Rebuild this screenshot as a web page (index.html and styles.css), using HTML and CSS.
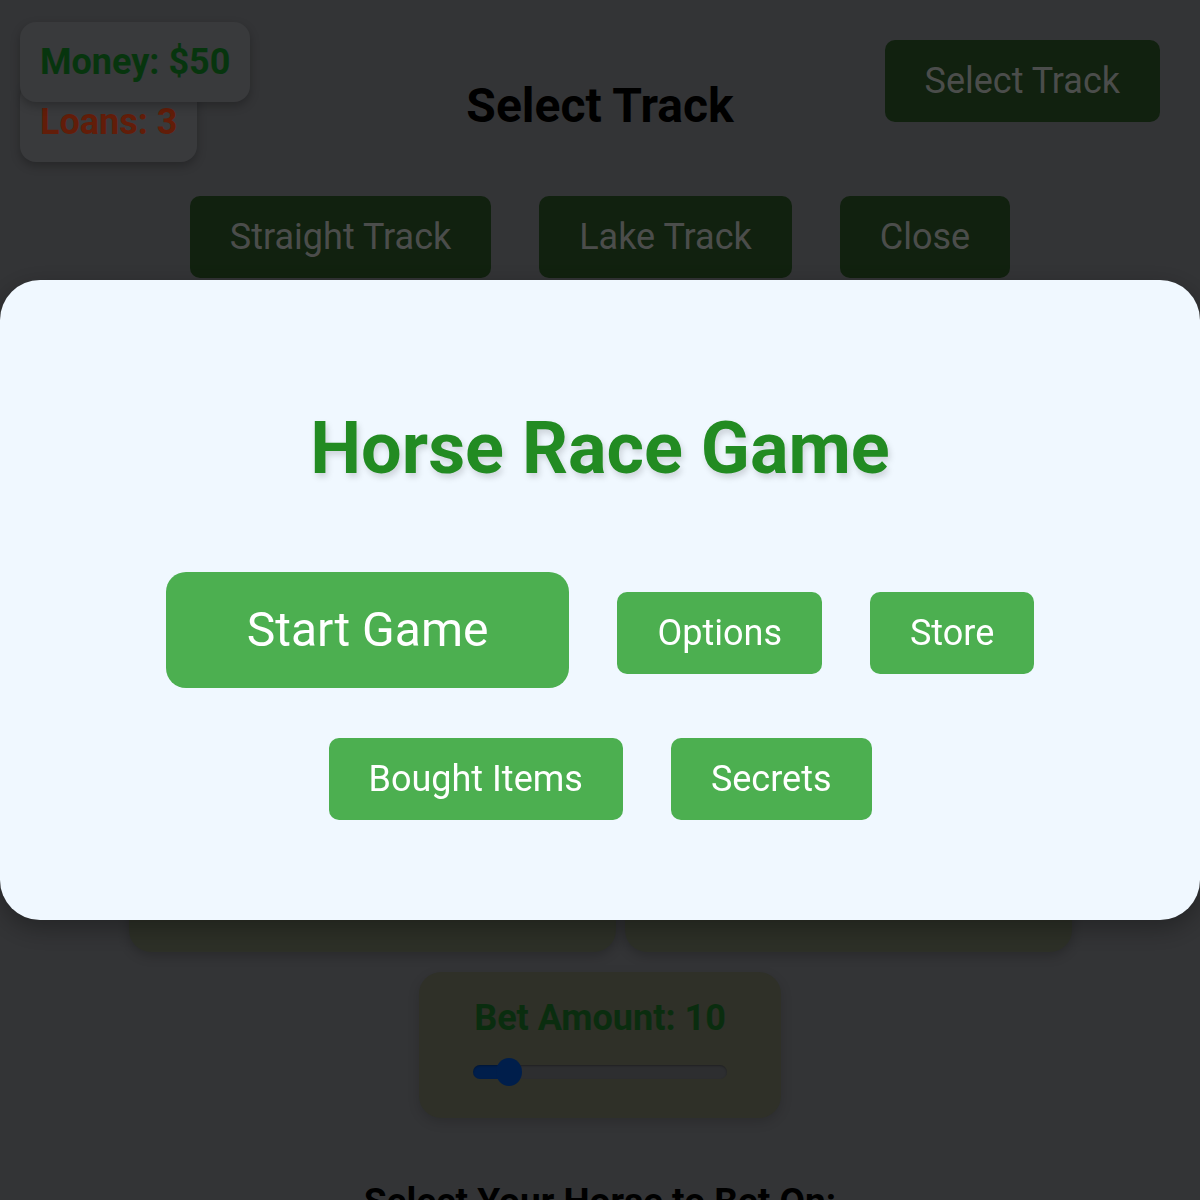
FILE: index.html
```html
<html>
    <head>
        <meta name="viewport" content="width=device-width, initial-scale=1.0">
        <link rel="stylesheet" href="styles.css">
    </head>
    <body>
        <div class="stats">
            <div class="stat money">Money: $50</div>
            <div class="stat loans">Loans: 3</div>
        </div>

        <div class="page">
            <div class="header">
                <div></div>
                <h1 class="page-title">Select Track</h1>
                <div class="header-right">
                    <button class="btn">Select Track</button>
                </div>
            </div>

            <div class="track-row">
                <button class="btn">Straight Track</button>
                <button class="btn">Lake Track</button>
                <button class="btn">Close</button>
            </div>

            <div class="cards">
                <div class="card card-left"></div>
                <div class="card card-right"></div>
            </div>

            <div class="bet-box">
                <div class="bet-label">Bet Amount: 10</div>
                <input class="bet-slider" type="range" min="10" max="100" value="10">
            </div>

            <h2 class="horse-title">Select Your Horse to Bet On:</h2>
        </div>

        <div class="overlay">
            <div class="modal">
                <h1 class="game-title">Horse Race Game</h1>
                <div class="menu-row first">
                    <button class="menu-btn big">Start Game</button>
                    <button class="menu-btn">Options</button>
                    <button class="menu-btn">Store</button>
                </div>
                <div class="menu-row">
                    <button class="menu-btn">Bought Items</button>
                    <button class="menu-btn">Secrets</button>
                </div>
            </div>
        </div>
    </body>
</html>
```

FILE: styles.css
```css
body {
    margin: 0;
    background-color: #66686c;
    font-family: Roboto, "Liberation Sans", sans-serif;
    overflow: hidden;
}

/* money + loans hud */
.stats {
    position: absolute;
    top: 22px;
    left: 20px;
    display: flex;
    flex-direction: column;
    align-items: flex-start;
}

.stat {
    padding: 20px 20px;
    font-size: 36px;
    font-weight: bold;
    line-height: 40px;
    background-color: #727478;
    border-radius: 16px;
    box-shadow: 0 4px 10px rgba(0, 0, 0, .25);
}

.stat.money {
    color: #0e6a1c;
    position: relative;
    z-index: 1;
}

.stat.loans {
    color: #c43a12;
    margin-top: -20px;
}

.page {
    display: flex;
    flex-direction: column;
    align-items: center;
}

.header {
    width: 100%;
    box-sizing: border-box;
    display: grid;
    grid-template-columns: 1fr auto 1fr;
    align-items: start;
    padding: 40px 40px 0 40px;
}

.header-right {
    display: flex;
    justify-content: flex-end;
}

.page-title {
    margin: 38px 0 0 0;
    font-size: 48px;
    line-height: 56px;
    color: #000;
}

.btn {
    font-family: Roboto, "Liberation Sans", sans-serif;
    font-size: 36px;
    line-height: 42px;
    padding: 20px 40px;
    border: none;
    border-radius: 10px;
    background-color: #22431e;
    color: #979a97;
}

.track-row {
    display: flex;
    gap: 48px;
    margin-top: 62px;
}

.cards {
    display: flex;
    gap: 9px;
    margin-top: 40px;
}

.card {
    height: 634px;
    background-color: #5a604e;
    border-radius: 22px;
    box-shadow: 0 4px 12px rgba(0, 0, 0, .2);
}

.card-left {
    width: 487px;
}

.card-right {
    width: 447px;
}

.bet-box {
    width: 362px;
    box-sizing: border-box;
    margin-top: 20px;
    padding: 25px 0 39px 0;
    background-color: #5e6050;
    border-radius: 22px;
    box-shadow: 0 4px 12px rgba(0, 0, 0, .15);
    display: flex;
    flex-direction: column;
    align-items: center;
}

.bet-label {
    font-size: 36px;
    font-weight: bold;
    line-height: 42px;
    color: #145a1e;
}

.bet-slider {
    -webkit-appearance: none;
    appearance: none;
    width: 254px;
    height: 14px;
    margin: 26px 0 0 0;
    border-radius: 7px;
    background: linear-gradient(to right, #003c96 0, #003c96 36px, #5a5c60 36px);
    box-shadow: inset 0 1px 2px rgba(0, 0, 0, .3);
}

.bet-slider::-webkit-slider-thumb {
    -webkit-appearance: none;
    width: 26px;
    height: 28px;
    border-radius: 50%;
    background-color: #003c96;
    margin-left: 23px;
}

.horse-title {
    margin: 62px 0 0 0;
    font-size: 37px;
    line-height: 43px;
    color: #000;
}

/* dimmed layer with the start menu on top */
.overlay {
    position: fixed;
    top: 0;
    left: 0;
    z-index: 10;
    width: 100%;
    height: 100%;
    background-color: rgba(0, 0, 0, .5);
    display: flex;
    align-items: center;
    justify-content: center;
}

.modal {
    width: 100%;
    box-sizing: border-box;
    padding: 127px 0 100px 0;
    background-color: #f0f8ff;
    border-radius: 40px;
    box-shadow: 0 8px 24px rgba(0, 0, 0, .3);
    display: flex;
    flex-direction: column;
    align-items: center;
}

.game-title {
    margin: 0 0 81px 0;
    font-size: 72px;
    line-height: 84px;
    color: #228b22;
    text-shadow: 2px 4px 6px rgba(0, 0, 0, .15);
}

.menu-row {
    display: flex;
    align-items: center;
    gap: 48px;
}

.menu-row + .menu-row {
    margin-top: 50px;
}

.menu-row.first .menu-btn {
    margin-top: 6px;
}

.menu-row.first .menu-btn.big {
    margin-top: 0;
}

.menu-btn {
    font-family: Roboto, "Liberation Sans", sans-serif;
    font-size: 36px;
    line-height: 42px;
    padding: 20px 40px;
    border: none;
    border-radius: 10px;
    background-color: #4caf50;
    color: #fff;
}

.menu-btn.big {
    font-size: 48px;
    line-height: 56px;
    padding: 30px 81px;
    border-radius: 20px;
}
```
